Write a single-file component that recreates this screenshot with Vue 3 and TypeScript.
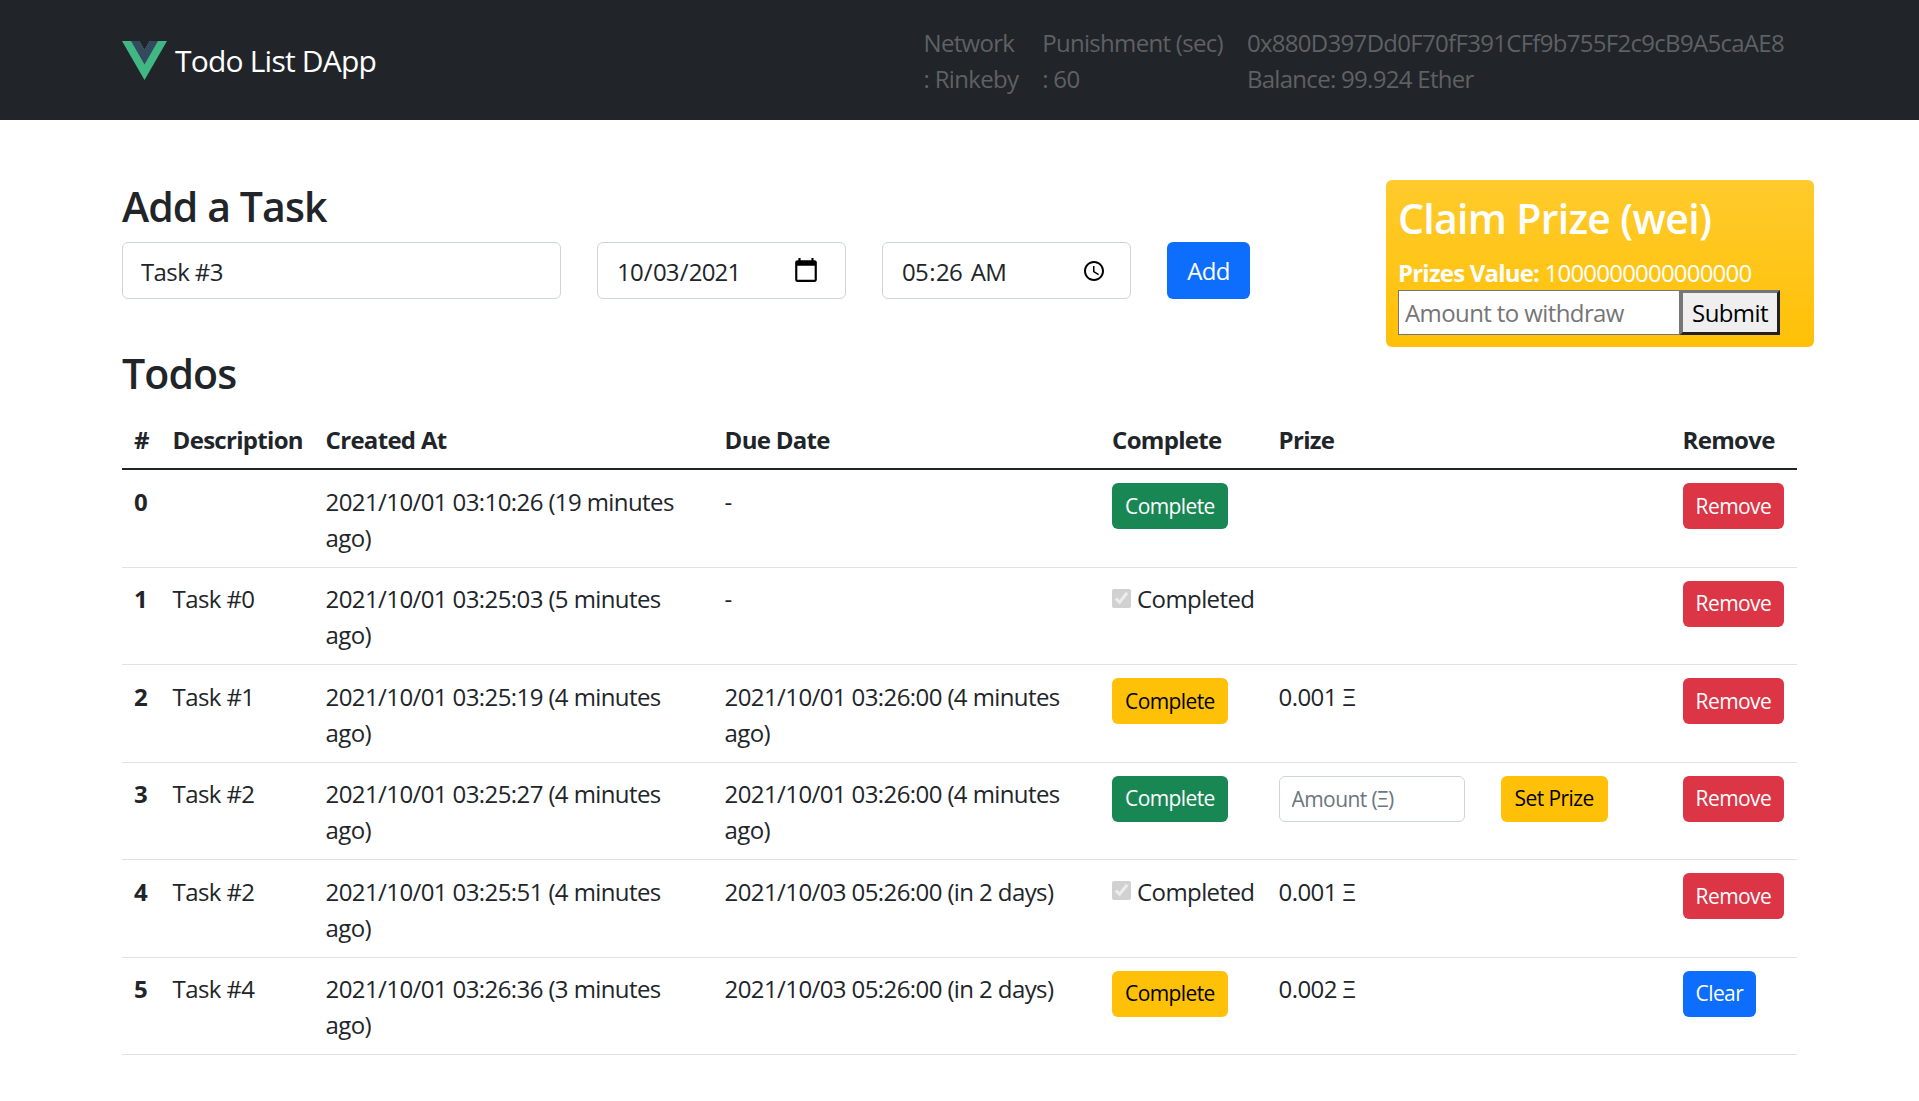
<script setup lang="ts">
interface Row {
  id: number
  desc: string
  created: string
  due: string
  complete: 'success' | 'warning' | 'done'
  prize: string
  setPrize?: boolean
  action: 'Remove' | 'Clear'
}
const rows: Row[] = [
  { id: 0, desc: '', created: '2021/10/01 03:10:26 (19 minutes ago)', due: '-', complete: 'success', prize: '', action: 'Remove' },
  { id: 1, desc: 'Task #0', created: '2021/10/01 03:25:03 (5 minutes ago)', due: '-', complete: 'done', prize: '', action: 'Remove' },
  { id: 2, desc: 'Task #1', created: '2021/10/01 03:25:19 (4 minutes ago)', due: '2021/10/01 03:26:00 (4 minutes ago)', complete: 'warning', prize: '0.001 Ξ', action: 'Remove' },
  { id: 3, desc: 'Task #2', created: '2021/10/01 03:25:27 (4 minutes ago)', due: '2021/10/01 03:26:00 (4 minutes ago)', complete: 'success', prize: '', setPrize: true, action: 'Remove' },
  { id: 4, desc: 'Task #2', created: '2021/10/01 03:25:51 (4 minutes ago)', due: '2021/10/03 05:26:00 (in 2 days)', complete: 'done', prize: '0.001 Ξ', action: 'Remove' },
  { id: 5, desc: 'Task #4', created: '2021/10/01 03:26:36 (3 minutes ago)', due: '2021/10/03 05:26:00 (in 2 days)', complete: 'warning', prize: '0.002 Ξ', action: 'Clear' },
]
</script>

<template>
  <div class="page">
    <header class="navbar">
      <div class="brand">
        <svg class="logo" viewBox="0 0 261.76 226.69" aria-hidden="true">
          <path fill="#41b883" d="M161.096.001l-30.225 52.351L100.647.001H-.005l130.877 226.688L261.749.001z" />
          <path fill="#34495e" d="M161.096.001l-30.225 52.351L100.647.001H52.346l78.526 136.01L209.398.001z" />
        </svg>
        <span class="brand-name">Todo List DApp</span>
      </div>
      <div class="info">
        <div class="info-col net">Network<br />: Rinkeby</div>
        <div class="info-col pun">Punishment (sec)<br />: 60</div>
        <div class="info-col acc">0x880D397Dd0F70fF391CFf9b755F2c9cB9A5caAE8<br />Balance: 99.924 Ether</div>
      </div>
    </header>

    <main class="main">
      <div class="top">
        <section class="add">
          <h2 class="title">Add a Task</h2>
          <form class="add-form" @submit.prevent>
            <input class="control name" type="text" value="Task #3" />
            <input class="control date" type="date" value="2021-10-03" />
            <input class="control time" type="time" value="05:26" />
            <button class="btn primary add-btn" type="button">Add</button>
          </form>
        </section>
        <aside class="claim">
          <h2 class="claim-title">Claim Prize (wei)</h2>
          <div class="claim-value"><b>Prizes Value:</b> 1000000000000000</div>
          <div class="claim-form">
            <input class="claim-input" type="text" placeholder="Amount to withdraw" />
            <button class="claim-submit" type="button">Submit</button>
          </div>
        </aside>
      </div>

      <h2 class="title todos">Todos</h2>
      <table class="table">
        <colgroup>
          <col class="c-id" /><col class="c-desc" /><col class="c-created" /><col class="c-due" />
          <col class="c-complete" /><col class="c-prize" /><col class="c-remove" />
        </colgroup>
        <thead>
          <tr>
            <th>#</th><th>Description</th><th>Created At</th><th>Due Date</th><th>Complete</th><th>Prize</th><th>Remove</th>
          </tr>
        </thead>
        <tbody>
          <tr v-for="r in rows" :key="r.id">
            <th>{{ r.id }}</th>
            <td>{{ r.desc }}</td>
            <td>{{ r.created }}</td>
            <td>{{ r.due }}</td>
            <td>
              <label v-if="r.complete === 'done'" class="done">
                <input class="check" type="checkbox" checked disabled />Completed
              </label>
              <button v-else class="btn sm" :class="r.complete" type="button">Complete</button>
            </td>
            <td>
              <div v-if="r.setPrize" class="prize-form">
                <input class="control amount" type="text" placeholder="Amount (Ξ)" />
                <button class="btn sm warning" type="button">Set Prize</button>
              </div>
              <template v-else>{{ r.prize }}</template>
            </td>
            <td>
              <button class="btn sm" :class="r.action === 'Remove' ? 'danger' : 'primary'" type="button">{{ r.action }}</button>
            </td>
          </tr>
        </tbody>
      </table>
    </main>
  </div>
</template>

<style>
html, body { margin: 0; background: #fff; }
</style>

<style scoped>
.page {
  font-family: "Open Sans", "Noto Sans", "Liberation Sans", sans-serif;
  font-size: 24px;
  line-height: 36px;
  color: #212529;
  letter-spacing: -0.6px;
}
.navbar {
  height: 120px;
  background: #212529;
  display: flex;
  align-items: center;
  justify-content: space-between;
  padding: 0 123px 0 122px;
  box-sizing: border-box;
}
.brand { display: flex; align-items: center; color: #fff; }
.logo { width: 45px; height: 39px; margin-right: 8px; }
.brand-name { font-size: 30px; line-height: 45px; letter-spacing: -0.8px; }
.info { display: flex; color: rgba(255, 255, 255, 0.28); padding-top: 2px; letter-spacing: -0.7px; }
.info-col { padding: 0 12px; white-space: nowrap; }
.main { padding: 60px 122px 0; }
.top { display: flex; justify-content: space-between; margin-right: -17px; }
.title { font-size: 41px; line-height: 58px; font-weight: 550; letter-spacing: -0.9px; margin: -3px 0 3px; }
.add-form { display: flex; align-items: center; gap: 36px; margin-top: 7px; }
.control {
  box-sizing: border-box;
  height: 57px;
  border: 1.5px solid #ced4da;
  border-radius: 6px;
  padding: 2px 18px 0;
  font: inherit;
  letter-spacing: inherit;
  color: #212529;
  background: #fff;
  outline: none;
}
.name { width: 439px; }
.date, .time { width: 249px; }
.date { letter-spacing: -0.8px; }
.date::-webkit-calendar-picker-indicator { width: 28px; height: 28px; padding: 0; margin: -2px 7px 0 0; }
.time::-webkit-calendar-picker-indicator { width: 24px; height: 24px; padding: 0; margin: -2px 6px 0 0; }
.time::-webkit-datetime-edit-ampm-field { margin-left: 4px; }
.btn {
  box-sizing: border-box;
  border: 1.5px solid transparent;
  border-radius: 6px;
  font: inherit;
  letter-spacing: inherit;
  padding: 0 18px;
  height: 57px;
  cursor: pointer;
}
.btn.sm { font-size: 21px; line-height: 31px; height: 46px; padding: 0 12px; display: block; margin-top: -0.5px; }
.primary { background: #0d6efd; color: #fff; }
.success { background: #198754; color: #fff; }
.warning { background: #ffc107; color: #000; }
.danger { background: #dc3545; color: #fff; }
.add-btn { width: 83px; padding: 0; }
.claim {
  box-sizing: border-box;
  width: 428px;
  height: 167px;
  background: #ffc107;
  background-image: linear-gradient(180deg, rgba(255, 255, 255, 0.15), rgba(255, 255, 255, 0));
  border-radius: 6px;
  padding: 12px;
  color: #fff;
}
.claim-title { font-size: 41px; line-height: 52px; font-weight: 600; letter-spacing: -0.7px; margin: 0 0 16px; }
.claim-value { line-height: 35px; margin-top: -5px; letter-spacing: -0.8px; }
.claim-form { display: flex; }
.claim-input {
  box-sizing: border-box;
  width: 282px;
  height: 45px;
  border: 1px solid #767676;
  padding: 0 6px;
  font: inherit;
  letter-spacing: inherit;
  background: #fff;
  outline: none;
}
.claim-input::placeholder { color: #757575; opacity: 1; }
.claim-submit {
  box-sizing: border-box;
  width: 100px;
  height: 45px;
  border-width: 3px;
  border-style: solid;
  border-color: #767676 #212121 #212121 #767676;
  background: #efefef;
  color: #000;
  font: inherit;
  letter-spacing: inherit;
  padding: 0;
}
.todos { margin-top: -3px; margin-bottom: 8px; }
.table { width: 100%; border-collapse: separate; border-spacing: 0; table-layout: fixed; }
.c-id { width: 38.6px; }
.c-desc { width: 153px; }
.c-created { width: 399px; }
.c-due { width: 387.5px; }
.c-complete { width: 166.5px; }
.c-prize { width: 404px; }
th, td {
  padding: 13.5px 12px 11px;
  text-align: left;
  vertical-align: top;
  border-bottom: 1px solid #dee2e6;
}
thead th { padding: 12px 12px 10px; border-bottom: 2px solid #212529; white-space: nowrap; letter-spacing: -0.7px; }
th { font-weight: 700; }
.done { white-space: nowrap; display: inline-flex; align-items: center; vertical-align: top; }
.check { width: 19px; height: 19px; margin: -2px 6px 0 0; }
.prize-form { display: flex; align-items: center; justify-content: space-between; width: 329px; margin-top: -0.5px; }
.prize-form .btn { margin-top: 0; width: 107px; padding: 0; }
.amount { width: 186px; height: 46px; font-size: 21px; padding: 0 12px; }
::placeholder { color: #6c757d; opacity: 1; }
</style>
